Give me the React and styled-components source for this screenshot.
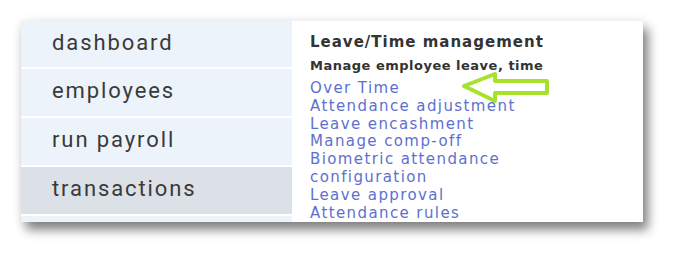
import React from 'react';
import styled, { createGlobalStyle } from 'styled-components';

const GlobalStyle = createGlobalStyle`
  html, body {
    margin: 0;
    padding: 0;
    background: #ffffff;
  }
  body {
    font-family: Roboto, "Liberation Sans", sans-serif;
  }
`;

const menuItems = [
  { label: 'dashboard' },
  { label: 'employees' },
  { label: 'run payroll' },
  { label: 'transactions', active: true },
  { label: '' }
];

const links = [
  'Over Time',
  'Attendance adjustment',
  'Leave encashment',
  'Manage comp-off',
  'Biometric attendance configuration',
  'Leave approval',
  'Attendance rules'
];

const ArrowIcon = () => (
  <ArrowSvg viewBox="0 0 92 34" width="92" height="34">
    <path
      d="M4 16 L35 4 L35 11 L87 11 L87 23 L35 23 L35 31 Z"
      fill="none"
      stroke="#a6e12c"
      strokeWidth="4"
      strokeLinejoin="round"
    />
  </ArrowSvg>
);

const App = () => (
  <Page>
    <GlobalStyle />
    <Panel>
      <Sidebar>
        {menuItems.map((item, i) => (
          <MenuRow key={i} active={item.active}>
            {item.label}
          </MenuRow>
        ))}
      </Sidebar>
      <Content>
        <Title>Leave/Time management</Title>
        <Subtitle>Manage employee leave, time</Subtitle>
        <LinkList>
          {links.map((l, i) => (
            <LinkItem key={l}>
              {l}
              {i === 0 && <ArrowIcon />}
            </LinkItem>
          ))}
        </LinkList>
      </Content>
    </Panel>
  </Page>
);

export default App;

const Page = styled.div`
  width: 685px;
  height: 265px;
  padding: 21px 0 0 21px;
  box-sizing: border-box;
  background: #fff;
`;

const Panel = styled.div`
  width: 622px;
  height: 201px;
  display: flex;
  overflow: hidden;
  background: #fff;
  box-shadow: 5px 8px 10px rgba(0, 0, 0, 0.45), 2px 2px 12px rgba(0, 0, 0, 0.12);
`;

const Sidebar = styled.div`
  width: 271px;
  flex-shrink: 0;
  display: flex;
  flex-direction: column;
  background: #edf3fa;
`;

const MenuRow = styled.div`
  flex-shrink: 0;
  box-sizing: border-box;
  height: 49px;
  display: flex;
  align-items: center;
  padding: 0 0 4px 31px;
  border-bottom: 2px solid #ffffff;
  background: ${({ active }) => (active ? '#dbe1e7' : '#edf3fa')};
  color: #3a3a3a;
  font-size: 22px;
  letter-spacing: 1.9px;

  &:first-child {
    height: 48px;
  }
`;

const Content = styled.div`
  flex: 1;
  padding: 12px 0 0 18px;
  font-family: "DejaVu Sans", Verdana, sans-serif;
`;

const Title = styled.div`
  font-size: 15px;
  font-weight: 700;
  color: #333;
  letter-spacing: 1px;
  line-height: 18px;
`;

const Subtitle = styled.div`
  margin-top: 7px;
  font-size: 13px;
  font-weight: 700;
  color: #333;
  letter-spacing: 0.5px;
  line-height: 16px;
`;

const LinkList = styled.div`
  margin-top: 6px;
  width: 215px;
  display: flex;
  flex-direction: column;
`;

const LinkItem = styled.div`
  position: relative;
  font-size: 15px;
  line-height: 17.8px;
  color: #5d70cf;
  letter-spacing: 1.4px;
`;

const ArrowSvg = styled.svg`
  position: absolute;
  left: 150px;
  top: -10px;
`;
